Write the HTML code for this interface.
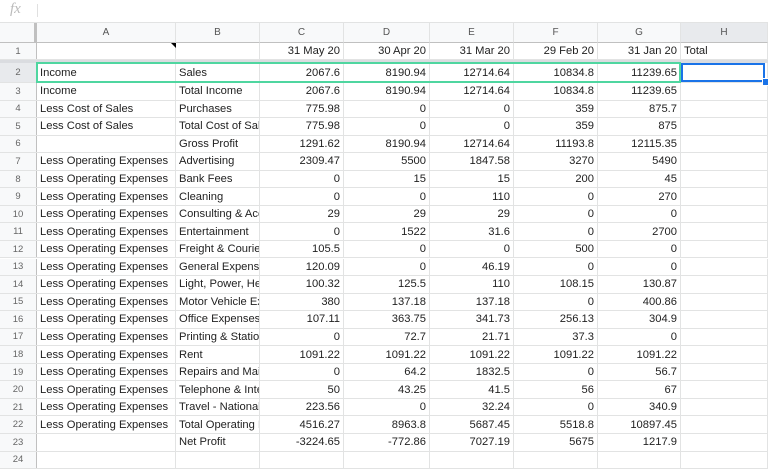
<!DOCTYPE html>
<html><head><style>
body{margin:0;width:768px;height:463px;overflow:hidden;background:#fff;font-family:"Liberation Sans",Arial,sans-serif;font-size:11.2px;color:#222;position:relative}
.fb{position:absolute;left:0;top:0;width:768px;height:22px;border-bottom:1px solid #e2e3e3;background:#fff}
.fx{position:absolute;left:10px;top:1px;font-family:"Liberation Serif",serif;font-style:italic;color:#bbb;font-size:15px}
.fbs{position:absolute;left:37px;top:4px;width:1px;height:13px;background:#e0e0e0}
.hdr{position:absolute;top:23px;height:20px;background:#f8f9fa;border-right:1px solid #e2e3e3;border-bottom:1px solid #c0c0c0;box-sizing:border-box;color:#555;font-size:10px;text-align:center;line-height:20px}
.r{position:absolute;left:0;width:768px;box-sizing:border-box;border-bottom:1px solid #e2e3e3}
.c{position:absolute;top:0;height:100%;box-sizing:border-box;border-right:1px solid #e2e3e3;white-space:nowrap;overflow:hidden;padding:0 3px;display:flex;align-items:center}
.rh{left:0;width:37px;background:#f8f9fa;color:#666;font-size:9.5px;justify-content:center;border-right:1px solid #c0c0c0}
.n{justify-content:flex-end}
</style></head><body>
<div class="fb"><span class="fx">fx</span><div class="fbs"></div></div>
<div class="hdr" style="left:0;width:37px;border-right:3px solid #c0c0c0"></div>
<div class="hdr" style="left:37px;width:139px">A</div>
<div class="hdr" style="left:176px;width:84px">B</div>
<div class="hdr" style="left:260px;width:84px">C</div>
<div class="hdr" style="left:344px;width:86px">D</div>
<div class="hdr" style="left:430px;width:84px">E</div>
<div class="hdr" style="left:514px;width:84px">F</div>
<div class="hdr" style="left:598px;width:83px">G</div>
<div class="hdr" style="left:681px;width:87px;background:#e8eaed">H</div>
<div id="g"></div>
<div style="position:absolute;left:0;top:60px;width:768px;height:3px;background:#dadce0"></div>
<div style="position:absolute;left:171px;top:43px;width:0;height:0;border-left:5px solid transparent;border-top:5px solid #000"></div>
<div style="position:absolute;left:36px;top:62px;width:645px;height:21px;box-sizing:border-box;border:2px solid #4fd6a0"></div>
<div style="position:absolute;left:681px;top:63px;width:84px;height:19px;box-sizing:border-box;border:2px solid #1a73e8"></div>
<div style="position:absolute;left:762px;top:78px;width:6px;height:6px;background:#1a73e8;border:1px solid #fff"></div>
<script>
var rows=[
["","","31 May 20","30 Apr 20","31 Mar 20","29 Feb 20","31 Jan 20","Total"],
["Income","Sales","2067.6","8190.94","12714.64","10834.8","11239.65",""],
["Income","Total Income","2067.6","8190.94","12714.64","10834.8","11239.65",""],
["Less Cost of Sales","Purchases","775.98","0","0","359","875.7",""],
["Less Cost of Sales","Total Cost of Sales","775.98","0","0","359","875",""],
["","Gross Profit","1291.62","8190.94","12714.64","11193.8","12115.35",""],
["Less Operating Expenses","Advertising","2309.47","5500","1847.58","3270","5490",""],
["Less Operating Expenses","Bank Fees","0","15","15","200","45",""],
["Less Operating Expenses","Cleaning","0","0","110","0","270",""],
["Less Operating Expenses","Consulting & Accounting","29","29","29","0","0",""],
["Less Operating Expenses","Entertainment","0","1522","31.6","0","2700",""],
["Less Operating Expenses","Freight & Courier","105.5","0","0","500","0",""],
["Less Operating Expenses","General Expenses","120.09","0","46.19","0","0",""],
["Less Operating Expenses","Light, Power, Heating","100.32","125.5","110","108.15","130.87",""],
["Less Operating Expenses","Motor Vehicle Expenses","380","137.18","137.18","0","400.86",""],
["Less Operating Expenses","Office Expenses","107.11","363.75","341.73","256.13","304.9",""],
["Less Operating Expenses","Printing & Stationery","0","72.7","21.71","37.3","0",""],
["Less Operating Expenses","Rent","1091.22","1091.22","1091.22","1091.22","1091.22",""],
["Less Operating Expenses","Repairs and Maintenance","0","64.2","1832.5","0","56.7",""],
["Less Operating Expenses","Telephone & Internet","50","43.25","41.5","56","67",""],
["Less Operating Expenses","Travel - National","223.56","0","32.24","0","340.9",""],
["Less Operating Expenses","Total Operating Expenses","4516.27","8963.8","5687.45","5518.8","10897.45",""],
["","Net Profit","-3224.65","-772.86","7027.19","5675","1217.9",""],
["","","","","","","",""]];
var L=[37,176,260,344,430,514,598,681,768],h="";
rows.forEach(function(r,i){
 var top,ht;
 if(i==0){top=43;ht=17}else if(i==1){top=63;ht=20}else{top=83+(i-2)*17.55;ht=17.55}
 h+='<div class="r" style="top:'+top+'px;height:'+ht+'px">';
 h+='<div class="c rh" style="'+(i==1?'background:#e8eaed':'')+'">'+(i+1)+'</div>';
 for(var j=0;j<8;j++){
  var n=(j>=2&&j<=6);
  h+='<div class="c'+(n?' n':'')+'" style="left:'+L[j]+'px;width:'+(L[j+1]-L[j])+'px">'+r[j].replace(/&/g,'&amp;')+'</div>';
 }
 h+='</div>';
});
document.getElementById('g').innerHTML=h;
</script>
</body></html>
